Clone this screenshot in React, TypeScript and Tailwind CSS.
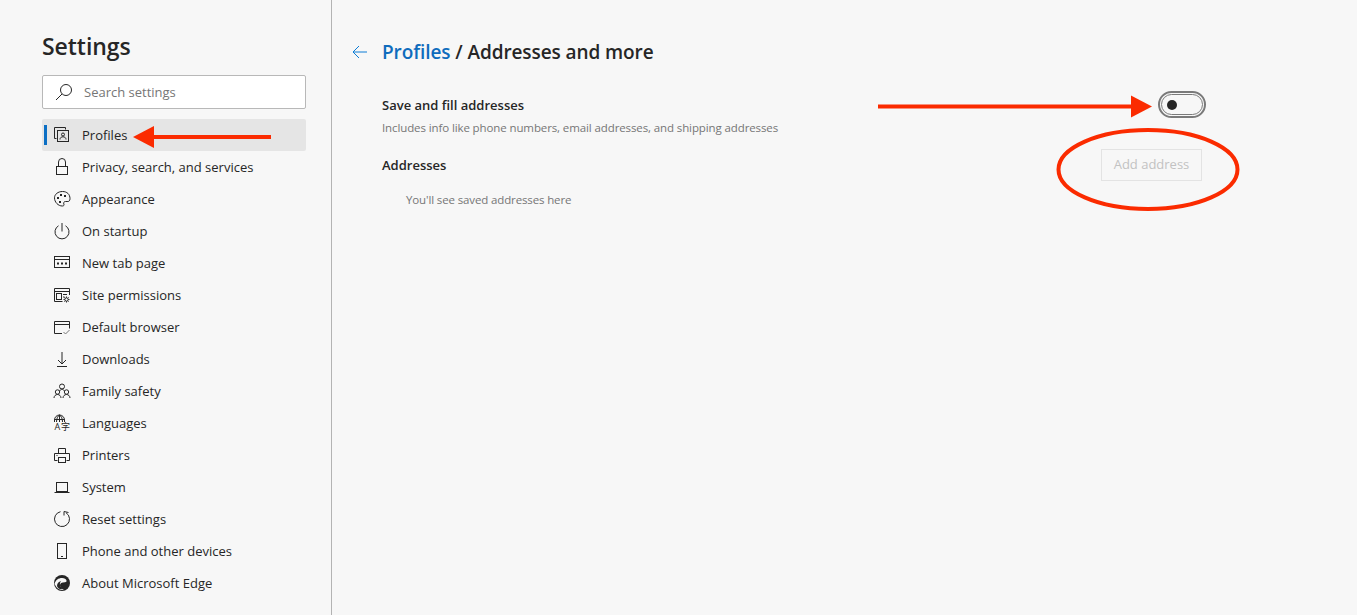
import React from "react";

const stroke = { fill: "none", stroke: "#262626", strokeWidth: 1 };

const Icon = ({ children }: { children: React.ReactNode }) => (
  <svg width="18" height="18" viewBox="0 0 18 18" className="shrink-0 overflow-visible" {...stroke}>
    {children}
  </svg>
);

const navItems: { label: string; icon: React.ReactNode }[] = [
  {
    label: "Profiles",
    icon: (
      <>
        <path d="M3.500 12.500h-2v-11h11v2" />
        <rect x="4.500" y="4.500" width="11" height="11" />
        <circle cx="10" cy="8.500" r="1.500" />
        <path d="M7 13.500c0-1.800 1.300-2.700 3-2.700s3 .9 3 2.700" />
      </>
    ),
  },
  {
    label: "Privacy, search, and services",
    icon: (
      <>
        <rect x="3.500" y="8.500" width="11" height="8" />
        <path d="M5.500 8.500V4a3.500 3.500 0 0 1 7 0v4.500" />
      </>
    ),
  },
  {
    label: "Appearance",
    icon: (
      <>
        <path d="M9.500 1.500c-4.500 0-8 2.800-8 6.300 0 4.400 3.700 8.200 7.800 8.200 1.700 0 2-1 1.500-2-.5-1.200.2-2.500 1.600-2.500h2.500c1.200 0 2.100-1 2.100-2.800 0-4.400-3-7.200-7.500-7.200z" />
        <rect x="4" y="7" width="2" height="2" fill="#262626" stroke="none" />
        <rect x="7" y="4" width="2" height="2" fill="#262626" stroke="none" />
        <rect x="11" y="5" width="2" height="2" fill="#262626" stroke="none" />
        <rect x="6" y="11" width="2" height="2" fill="#262626" stroke="none" />
      </>
    ),
  },
  {
    label: "On startup",
    icon: (
      <>
        <path d="M9 1v8.500" />
        <path d="M5.500 3.800a7 7 0 1 0 7 0" />
      </>
    ),
  },
  {
    label: "New tab page",
    icon: (
      <>
        <rect x="1.500" y="2.500" width="15" height="11" />
        <path d="M1.500 5.500h15" />
        <path d="M4 9.500h2M8 9.500h2M12 9.500h2" strokeWidth="2" />
      </>
    ),
  },
  {
    label: "Site permissions",
    icon: (
      <>
        <path d="M9.500 15.500h-8v-13h15V9" />
        <path d="M1.500 5.500h15" />
        <rect x="3.500" y="7.500" width="5" height="6" />
        <path d="M10 8.500h4M10 11h1.500" />
        <circle cx="13.500" cy="13.500" r="1.700" />
        <path d="M13.500 10.500v1.300M13.500 15.200v1.300M10.500 13.500h1.300M15.200 13.500h1.300M11.400 11.400l.9.900M14.700 14.700l.9.900M11.400 15.600l.9-.9M14.700 12.300l.9-.9" />
      </>
    ),
  },
  {
    label: "Default browser",
    icon: (
      <>
        <path d="M9 15.500H1.500v-12h15v7" />
        <path d="M1.500 6.500h15" />
        <path d="M10.500 14l2 2 4-4" stroke="#777" />
      </>
    ),
  },
  {
    label: "Downloads",
    icon: (
      <>
        <path d="M9 2v12" />
        <path d="M5 10l4 4 4-4" />
        <path d="M4 16.500h10" />
      </>
    ),
  },
  {
    label: "Family safety",
    icon: (
      <>
        <circle cx="9" cy="4.500" r="2.500" />
        <circle cx="4.500" cy="10" r="2.200" />
        <circle cx="13.500" cy="10" r="2.200" />
        <path d="M1 16c0-2 1.500-3.500 3.500-3.500S8 14 8 16M10 16c0-2 1.500-3.500 3.500-3.500S17 14 17 16" />
        <path d="M6.700 9c.5-1 1.200-1.800 2.300-1.800s1.800.8 2.300 1.800" />
      </>
    ),
  },
  {
    label: "Languages",
    icon: (
      <>
        <path d="M1.500 8V6a5 5 0 0 1 10 0v2M1.500 5.500h10M6.500 1v7M3.500 8C3.500 5 4.500 2 6.500 1c2 1 3 4 3 7" />
        <text x="1.500" y="16" fontSize="9" fill="#262626" stroke="none" fontFamily="'Open Sans', sans-serif">A</text>
        <text x="8" y="16" fontSize="9" fill="#262626" stroke="none" fontFamily="'Noto Sans CJK SC', sans-serif">字</text>
      </>
    ),
  },
  {
    label: "Printers",
    icon: (
      <>
        <path d="M5.500 7.500v-5h7v5" />
        <path d="M4.500 14.500h-3v-7h15v7h-3" />
        <rect x="5.500" y="11.500" width="7" height="5" />
        <path d="M3.500 9.500h1" />
      </>
    ),
  },
  {
    label: "System",
    icon: (
      <>
        <rect x="3.500" y="4.500" width="11" height="9" />
        <path d="M1.500 14.500h15" />
      </>
    ),
  },
  {
    label: "Reset settings",
    icon: (
      <>
        <path d="M7.500 1.700A7.500 7.500 0 1 0 13 2.700" />
        <path d="M11 5.500V1.500l4.500 1" />
      </>
    ),
  },
  {
    label: "Phone and other devices",
    icon: (
      <>
        <rect x="4.500" y="1.500" width="9" height="15" />
        <path d="M8 14.500h2" />
      </>
    ),
  },
  {
    label: "About Microsoft Edge",
    icon: (
      <>
        <circle cx="9" cy="9" r="8" fill="#262626" stroke="none" />
        <path d="M1.500 10c1-4 4-6 7.500-6 2.500 0 4 1 4.500 2.500.2.900-.3 1.700-1.500 1.700-3.500 0-5 1.300-5 3 0 2 2 4 4 4.800-3.500.5-6.500-1-8-3.500-.5-.8-.7-1.500-1.500-2.500z" fill="#f7f7f7" stroke="none" />
        <path d="M4 12c0-2.500 1.700-4.500 4-5-1.200 1.500-1.500 3.500-.5 5.500.5 1 1.200 1.800 2 2.500C7 15.500 4.500 14.500 4 12z" fill="#262626" stroke="none" />
      </>
    ),
  },
];

// red markup drawn on top of the screenshot
const Annotations = () => (
  <svg className="absolute left-0 top-0 pointer-events-none" width="1357" height="615" viewBox="0 0 1357 615">
    <path d="M271 137H152" stroke="#fb2b00" strokeWidth="4" fill="none" />
    <path d="M133 137l21-11v22z" fill="#fb2b00" />
    <path d="M878 106.500h256" stroke="#fb2b00" strokeWidth="4" fill="none" />
    <path d="M1152 106.500l-21-11v22z" fill="#fb2b00" />
    <ellipse cx="1148" cy="169.500" rx="89.500" ry="39.500" stroke="#fb2b00" strokeWidth="4" fill="none" />
  </svg>
);

export default function App() {
  return (
    <div className="relative flex h-[615px] w-[1357px] overflow-hidden bg-[#f7f7f7] font-['Open_Sans','Noto_Sans',sans-serif] text-[#262626]">
      {/* Sidebar */}
      <aside className="h-full w-[332px] shrink-0 border-r border-[#b3b3b3] pl-[42px] pr-[25px] pt-[28px]">
        <h1 className="mb-[11px] h-[36px] text-[23px] font-semibold leading-[36px] tracking-[-0.05px]">Settings</h1>
        <div className="mb-[10px] flex h-[34px] items-center rounded-[2px] border border-[#b8b8b8] bg-white pl-[12px]">
          <svg width="18" height="18" viewBox="0 0 18 18" fill="none" stroke="#262626" strokeWidth="1">
            <circle cx="11" cy="7" r="5.500" />
            <path d="M7 11l-6 6" />
          </svg>
          <span className="ml-[11px] pt-[2px] text-[13px] text-[#767676]">Search settings</span>
        </div>
        <nav className="flex flex-col">
          {navItems.map((item, i) => (
            <div
              key={item.label}
              className={`relative flex h-[32px] items-center gap-[11px] pl-[11px] text-[13px] ${i === 0 ? "rounded-[2px] bg-[#e5e5e5]" : ""}`}
            >
              {i === 0 && <span className="absolute left-[2px] top-[6px] h-[20px] w-[3px] bg-[#0c6fc4]" />}
              <Icon>{item.icon}</Icon>
              <span className="pt-[2px]">{item.label}</span>
            </div>
          ))}
        </nav>
      </aside>

      {/* Content */}
      <main className="flex-1 pl-[20px] pr-[155px] pt-[38px]">
        <div className="flex h-[28px] items-center">
          <svg width="16" height="14" viewBox="0 0 16 14" fill="none" stroke="#0c7cd5" strokeWidth="1">
            <path d="M15 7H1M7 1L1 7l6 6" />
          </svg>
          <h2 className="ml-[14px] text-[19px] font-semibold tracking-[-0.09px]">
            <span className="text-[#0f6cbd]">Profiles</span> / Addresses and more
          </h2>
        </div>
        <div className="ml-[30px] mt-[28px]">
          <div className="flex items-start justify-between">
            <div>
              <div className="h-[22px] text-[13px] font-semibold leading-[22px]">Save and fill addresses</div>
              <div className="mt-[3px] text-[11.500px] leading-[18px] tracking-[-0.11px] text-[#767676]">
                Includes info like phone numbers, email addresses, and shipping addresses
              </div>
            </div>
            <div className="mr-[-4px] mt-[-3px] flex h-[27px] w-[48px] items-center rounded-full border-2 border-[#7a7a7a] p-[1px]">
              <div className="flex h-full w-full items-center rounded-full border border-[#7a7a7a] pl-[5px]">
                <div className="h-[10px] w-[10px] rounded-full bg-[#262626]" />
              </div>
            </div>
          </div>
          <div className="mt-[12px] flex items-center justify-between">
            <div className="text-[13px] font-semibold leading-[22px]">Addresses</div>
            <button className="flex h-[32px] w-[101px] items-center justify-center border border-[#e3e3e3] text-[13px] text-[#c2c2c2]">
              Add address
            </button>
          </div>
          <div className="ml-[24px] mt-[10px] text-[11.500px] leading-[18px] tracking-[-0.13px] text-[#767676]">You'll see saved addresses here</div>
        </div>
      </main>

      <Annotations />
    </div>
  );
}
